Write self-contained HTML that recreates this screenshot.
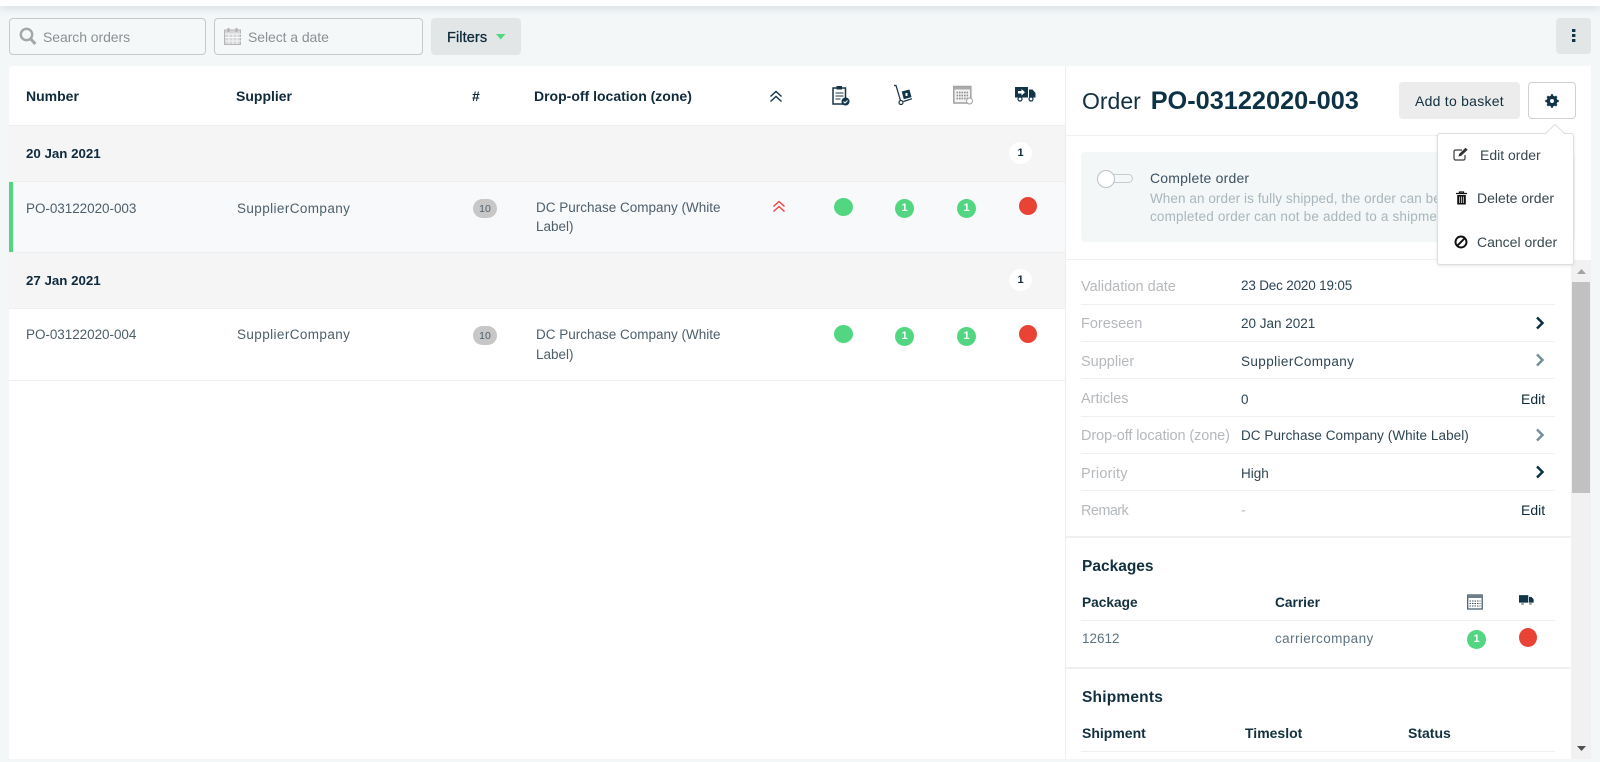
<!DOCTYPE html>
<html><head><meta charset="utf-8"><style>
html,body{margin:0;padding:0}
body{width:1600px;height:762px;position:relative;overflow:hidden;background:#f3f7f8;font-family:"Liberation Sans",sans-serif;color:#0e2a3b;font-size:14px}
.a{position:absolute}
.t{position:absolute;white-space:nowrap;line-height:20px;height:20px;margin-top:-10px}
.b{font-weight:bold;font-size:14px}
.r{color:#4d5f6b;font-size:13.5px}
.l{color:#b5b9bc;font-size:14.5px}
.v{color:#2e4553;font-size:13.5px}
.g{color:#a9b6bc;font-size:13.5px}
.m{font-size:14px;color:#37474f}
.dot{position:absolute;border-radius:50%}
.bd{position:absolute;border-radius:50%;background:#53d681;color:#fff;font-size:11px;font-weight:bold;text-align:center;width:19px;height:19px;line-height:19px}
.ln{position:absolute;height:1px;background:#eef0f1}
svg{position:absolute;overflow:visible}
</style></head><body>
<div class="a" style="left:0;top:0;width:1600px;height:6px;background:#fff;box-shadow:0 2px 8px rgba(60,80,90,.18)"></div>

<div class="a" style="left:9px;top:18px;width:195px;height:35px;border:1px solid #c4c9cb;border-radius:4px;background:#f5f8f9"></div>
<svg style="left:19px;top:27px" width="18" height="19" viewBox="0 0 18 19"><circle cx="7.5" cy="7.5" r="5.7" fill="none" stroke="#a6a6a6" stroke-width="2.4"/><path d="M11.8 12l4.5 5" stroke="#a6a6a6" stroke-width="3" fill="none"/></svg>
<span class="t" style="left:43px;top:37px;color:#8b9093;letter-spacing:-.07px">Search orders</span>

<div class="a" style="left:214px;top:18px;width:207px;height:35px;border:1px solid #c4c9cb;border-radius:4px;background:#f5f8f9"></div>
<svg style="left:224px;top:27px" width="18" height="18" viewBox="0 0 18 18"><rect x=".5" y="3" width="16" height="14.5" fill="#d6d6d6" stroke="#b5b5b5"/><path d="M1 7h16M1 10.5h16M1 14h16M5 7v10M9 7v10M13 7v10" stroke="#f5f8f9" stroke-width="1"/><path d="M4.5 1v4M12.5 1v4" stroke="#b0b0b0" stroke-width="2"/></svg>
<span class="t" style="left:248px;top:37px;color:#8b9093;letter-spacing:-.07px">Select a date</span>

<div class="a" style="left:431px;top:18px;width:90px;height:37px;border-radius:4px;background:#e2e6e7"></div>
<span class="t" style="left:447px;top:38px;font-size:14.5px;letter-spacing:.1px;-webkit-text-stroke:.3px #0e2a3b">Filters</span>
<svg style="left:496px;top:34px" width="10" height="7"><path d="M0 0h9.5L4.7 5.5z" fill="#53d681"/></svg>

<div class="a" style="left:1556px;top:18px;width:35px;height:36px;border-radius:4px;background:#e2e6e7"></div>
<svg style="left:1572px;top:29px" width="4" height="13"><path d="M0 0h3.4v3H0zM0 5h3.4v3H0zM0 10h3.4v3H0z" fill="#12354a"/></svg>

<!-- table -->
<div class="a" style="left:9px;top:66px;width:1056px;height:693px;background:#fff;border-radius:3px 0 0 0"></div>
<div class="a" style="left:9px;top:125px;width:1056px;height:56px;background:#f5f5f5;border-top:1px solid #eee;box-sizing:border-box"></div>
<div class="a" style="left:9px;top:181px;width:1056px;height:71px;background:#f8f9fb;border-top:1px solid #efefef;box-sizing:border-box"></div>
<div class="a" style="left:9px;top:182px;width:4px;height:70px;background:#53d681"></div>
<div class="a" style="left:9px;top:252px;width:1056px;height:56px;background:#f5f5f5;border-top:1px solid #eee;box-sizing:border-box"></div>
<div class="ln" style="left:9px;top:308px;width:1056px;background:#efefef"></div>
<div class="ln" style="left:9px;top:380px;width:1056px;background:#efefef"></div>

<span class="t b" style="left:26px;top:96px">Number</span>
<span class="t b" style="left:236px;top:96px">Supplier</span>
<span class="t b" style="left:472px;top:96px">#</span>
<span class="t b" style="left:534px;top:96px">Drop-off location (zone)</span>

<svg style="left:769px;top:90px" width="14" height="13" viewBox="0 0 14 13" fill="none" stroke="#12354a" stroke-width="1.4"><path d="M1.5 6.5L7 1.5l5.500 5M1.500 11.500L7 6.500l5.500 5"/></svg>
<svg style="left:832px;top:85px" width="18" height="21" viewBox="0 0 18 21" fill="none"><rect x="1" y="3" width="12.500" height="16" fill="#fff" stroke="#1a3445" stroke-width="1.500"/><rect x="4.500" y="1" width="5.500" height="3.500" fill="#1a3445"/><path d="M3.500 8h8M3.500 11h8M3.500 14h5" stroke="#1a3445"/><circle cx="13.500" cy="16.500" r="4" fill="#12354a"/><path d="M11.500 16.500l1.500 1.500 2.500-2.500" stroke="#fff"/></svg>
<svg style="left:893px;top:84px" width="20" height="22" viewBox="0 0 20 22" fill="none" stroke="#1a3445"><path d="M1 1.500h2l4.500 15" stroke-width="1.300"/><circle cx="8" cy="18.500" r="2" stroke-width="1.200"/><path d="M10.500 17.500l8.500-2.800" stroke-width="1.200"/><rect x="9.500" y="6.500" width="8" height="8" fill="#12354a" stroke="none" transform="rotate(-15 13 10)"/><rect x="12.500" y="9" width="2" height="3" fill="#fff" stroke="none"/></svg>
<svg style="left:953px;top:85px" width="20" height="20" viewBox="0 0 20 20" fill="none"><rect x=".8" y="1.500" width="17" height="16.500" stroke="#a0a0a0" stroke-width="1.500" fill="#f4f4f4"/><rect x=".8" y="1.500" width="17" height="3" fill="#aaa"/><path d="M3.500 7.500h12M3.500 10.500h12M3.500 13.500h12" stroke="#8f8f8f" stroke-width="1.700" stroke-dasharray="1.600 .9"/><circle cx="16.500" cy="16" r="3" fill="#fff" stroke="#a0a0a0"/></svg>
<svg style="left:1015px;top:87px" width="21" height="15" viewBox="0 0 21 15"><rect x="0" y="0" width="13" height="10.500" fill="#12354a"/><path d="M3 4h3.500V2L10 5.200 6.500 8.500V6.500H3z" fill="#fff"/><path d="M14 2.500h3.500L20.500 6v4.500H14z" fill="#12354a"/><circle cx="5" cy="12" r="2" fill="#fff" stroke="#12354a" stroke-width="1.200"/><circle cx="16" cy="12" r="2" fill="#fff" stroke="#12354a" stroke-width="1.200"/></svg>

<span class="t b" style="left:26px;top:154px;font-size:13.300px">20 Jan 2021</span>
<div class="dot" style="left:1009px;top:142px;width:23px;height:22px;background:#fff;color:#0e2a3b;font-size:11px;font-weight:bold;line-height:22px;text-align:center">1</div>

<span class="t r" style="left:26px;top:209px;letter-spacing:-.05px">PO-03122020-003</span>
<span class="t r" style="left:237px;top:209px;letter-spacing:.4px">SupplierCompany</span>
<div class="a" style="left:473px;top:199px;width:24px;height:19px;border-radius:10px;background:#c7c7c7;color:#4d5f6b;font-size:10.500px;line-height:20px;text-align:center">10</div>
<span class="t r" style="left:536px;top:208px">DC Purchase Company (White</span>
<span class="t r" style="left:536px;top:227px">Label)</span>
<svg style="left:772px;top:200px" width="14" height="13" viewBox="0 0 14 13" fill="none" stroke="#ef3b3b" stroke-width="1.300"><path d="M1.500 6.500L7 1.500l5.500 5M1.500 11.500L7 6.500l5.500 5"/></svg>
<div class="dot" style="left:834px;top:198px;width:19px;height:18px;background:#53d681"></div>
<div class="bd" style="left:895px;top:199px">1</div>
<div class="bd" style="left:957px;top:199px">1</div>
<div class="dot" style="left:1019px;top:197px;width:18px;height:18px;background:#e84335"></div>

<span class="t b" style="left:26px;top:281px;font-size:13.300px">27 Jan 2021</span>
<div class="dot" style="left:1009px;top:269px;width:23px;height:22px;background:#fff;color:#0e2a3b;font-size:11px;font-weight:bold;line-height:22px;text-align:center">1</div>

<span class="t r" style="left:26px;top:335px;letter-spacing:-.05px">PO-03122020-004</span>
<span class="t r" style="left:237px;top:335px;letter-spacing:.4px">SupplierCompany</span>
<div class="a" style="left:473px;top:326px;width:24px;height:19px;border-radius:10px;background:#c7c7c7;color:#4d5f6b;font-size:10.500px;line-height:20px;text-align:center">10</div>
<span class="t r" style="left:536px;top:335px">DC Purchase Company (White</span>
<span class="t r" style="left:536px;top:355px">Label)</span>
<div class="dot" style="left:834px;top:325px;width:19px;height:18px;background:#53d681"></div>
<div class="bd" style="left:895px;top:327px">1</div>
<div class="bd" style="left:957px;top:327px">1</div>
<div class="dot" style="left:1019px;top:325px;width:18px;height:18px;background:#e84335"></div>

<!-- panel -->
<div class="a" style="left:1065px;top:66px;width:526px;height:693px;background:#fff;border-left:1px solid #eee;box-sizing:border-box"></div>
<span class="t" style="left:1082px;top:101px;font-size:23px;line-height:30px;height:30px;margin-top:-15px;color:#12303f">Order <b style="font-size:25.300px;color:#0d3145;margin-left:3.500px">PO-03122020-003</b></span>
<div class="a" style="left:1399px;top:82px;width:121px;height:37px;background:#ececec;border-radius:4px"></div>
<span class="t" style="left:1415px;top:101px;font-size:14px;letter-spacing:.25px;color:#12303f">Add to basket</span>
<div class="a" style="left:1528px;top:82px;width:48px;height:37px;box-sizing:border-box;border:1px solid #cfd2d3;border-radius:4px;background:#fff"></div>
<svg style="left:1545px;top:94px" width="14" height="14" viewBox="0 0 14 14"><circle cx="7" cy="7" r="3.700" fill="none" stroke="#12354a" stroke-width="3.400"/><path d="M7 .3v2.500M7 11.200v2.500M.3 7h2.500M11.200 7h2.500M2.300 2.300l1.800 1.800M9.900 9.900l1.800 1.800M11.700 2.300L9.900 4.100M4.100 9.900l-1.800 1.800" stroke="#12354a" stroke-width="2.200"/></svg>
<div class="ln" style="left:1066px;top:135px;width:506px"></div>

<div class="a" style="left:1081px;top:152px;width:494px;height:90px;background:#f3f7f8;border-radius:4px"></div>
<div class="a" style="left:1098px;top:174px;width:35px;height:9px;box-sizing:border-box;border:1px solid #c6cbce;border-radius:5px;background:#f3f7f8"></div>
<div class="dot" style="left:1097px;top:170px;width:18px;height:18px;box-sizing:border-box;border:1px solid #bcc2c5;background:#fff"></div>
<span class="t" style="left:1150px;top:178px;font-size:14px;letter-spacing:.2px;color:#3d5260">Complete order</span>
<span class="t g" style="left:1150px;top:199px;letter-spacing:.07px">When an order is fully shipped, the order can be completed</span>
<span class="t g" style="left:1150px;top:217px;letter-spacing:.18px">completed order can not be added to a shipment anymore</span>
<div class="ln" style="left:1066px;top:259px;width:506px"></div>

<!-- details -->
<span class="t l" style="left:1081px;top:287px">Validation date</span><span class="t v" style="left:1241px;top:286px;letter-spacing:-.18px">23 Dec 2020 19:05</span>
<div class="ln" style="left:1081px;top:304px;width:474px"></div>
<span class="t l" style="left:1081px;top:324px">Foreseen</span><span class="t v" style="left:1241px;top:324px">20 Jan 2021</span>
<div class="ln" style="left:1081px;top:341px;width:474px"></div>
<span class="t l" style="left:1081px;top:362px">Supplier</span><span class="t v" style="left:1241px;top:362px;letter-spacing:.4px">SupplierCompany</span>
<div class="ln" style="left:1081px;top:378px;width:474px"></div>
<span class="t l" style="left:1081px;top:399px">Articles</span><span class="t v" style="left:1241px;top:400px">0</span><span class="t" style="left:1521px;top:399px;font-size:14px">Edit</span>
<div class="ln" style="left:1081px;top:416px;width:474px"></div>
<span class="t l" style="left:1081px;top:436px;letter-spacing:-.1px">Drop-off location (zone)</span><span class="t v" style="left:1241px;top:436px;letter-spacing:.06px">DC Purchase Company (White Label)</span>
<div class="ln" style="left:1081px;top:453px;width:474px"></div>
<span class="t l" style="left:1081px;top:474px;letter-spacing:.2px">Priority</span><span class="t v" style="left:1241px;top:474px">High</span>
<div class="ln" style="left:1081px;top:490px;width:474px"></div>
<span class="t l" style="left:1081px;top:511px;letter-spacing:-.6px">Remark</span><span class="t l" style="left:1241px;top:511px">-</span><span class="t" style="left:1521px;top:510px;font-size:14px">Edit</span>
<svg style="left:1535px;top:316px" width="10" height="14"><path d="M2 1.500L7.500 7 2 12.500" fill="none" stroke="#0d3145" stroke-width="2.500"/></svg>
<svg style="left:1535px;top:353px" width="10" height="14"><path d="M2 1.500L7.500 7 2 12.500" fill="none" stroke="#75909c" stroke-width="2.500"/></svg>
<svg style="left:1535px;top:428px" width="10" height="14"><path d="M2 1.500L7.500 7 2 12.500" fill="none" stroke="#75909c" stroke-width="2.500"/></svg>
<svg style="left:1535px;top:465px" width="10" height="14"><path d="M2 1.500L7.500 7 2 12.500" fill="none" stroke="#0d3145" stroke-width="2.500"/></svg>
<div class="a" style="left:1066px;top:536px;width:505px;height:2px;background:#eef0f1"></div>

<!-- packages -->
<span class="t" style="left:1082px;top:567px;font-weight:bold;font-size:15.500px;color:#12303f">Packages</span>
<span class="t b" style="left:1082px;top:603px;font-size:13.700px;color:#12303f">Package</span>
<span class="t b" style="left:1275px;top:603px;font-size:13.700px;color:#12303f">Carrier</span>
<svg style="left:1467px;top:594px" width="16" height="16" viewBox="0 0 16 16"><rect x=".7" y="1" width="14.500" height="14" fill="#fff" stroke="#3d5563" stroke-width="1.200"/><rect x=".7" y="1" width="14.500" height="3" fill="#6d7f8a"/><path d="M2.500 7h11M2.500 9.500h11M2.500 12h11" stroke="#3d5563" stroke-dasharray="1.500 1"/></svg>
<svg style="left:1519px;top:595px" width="15" height="11" viewBox="0 0 21 15"><rect width="13" height="10.500" fill="#12354a"/><path d="M14 2.500h3.500L20.500 6v4.500H14z" fill="#12354a"/><circle cx="5" cy="12" r="2" fill="#9aa" /><circle cx="16" cy="12" r="2" fill="#9aa"/></svg>
<div class="ln" style="left:1081px;top:620px;width:474px"></div>
<span class="t r" style="left:1082px;top:639px;color:#5d7280">12612</span>
<span class="t r" style="left:1275px;top:639px;letter-spacing:.4px;color:#5d7280">carriercompany</span>
<div class="bd" style="left:1467px;top:630px">1</div>
<div class="dot" style="left:1519px;top:628px;width:18px;height:19px;background:#e84335"></div>
<div class="a" style="left:1066px;top:667px;width:505px;height:2px;background:#eef0f1"></div>

<span class="t" style="left:1082px;top:698px;font-weight:bold;font-size:15.500px;letter-spacing:.2px;color:#12303f">Shipments</span>
<span class="t b" style="left:1082px;top:733px;color:#12303f">Shipment</span>
<span class="t b" style="left:1245px;top:733px;color:#12303f">Timeslot</span>
<span class="t b" style="left:1408px;top:733px;color:#12303f">Status</span>
<div class="ln" style="left:1081px;top:751px;width:474px"></div>

<!-- scrollbar -->
<div class="a" style="left:1571px;top:260px;width:20px;height:499px;background:#f1f1f1"></div>
<div class="a" style="left:1572px;top:282px;width:18px;height:211px;background:#c1c1c1"></div>
<svg style="left:1577px;top:269px" width="9" height="6"><path d="M0 5h9L4.500 0z" fill="#a3a3a3"/></svg>
<svg style="left:1577px;top:746px" width="9" height="6"><path d="M0 0h9L4.500 5z" fill="#505050"/></svg>

<!-- dropdown -->
<div class="a" style="left:1437px;top:133px;width:137px;height:132px;box-sizing:border-box;background:#fff;border:1px solid #dcdfe0;border-radius:3px;box-shadow:0 1px 3px rgba(0,0,0,.1)"></div>
<svg style="left:1545px;top:124px" width="20" height="10"><path d="M0 10L10 .5 20 10" fill="#fff" stroke="#dcdfe0"/><path d="M1 10.500h18" stroke="#fff" stroke-width="2"/></svg>
<svg style="left:1453px;top:147px" width="16" height="14" viewBox="0 0 16 14"><path d="M12 8v3.500a1.500 1.500 0 0 1-1.500 1.500h-8A1.500 1.500 0 0 1 1 11.500v-7A1.500 1.500 0 0 1 2.500 3H9" fill="none" stroke="#3a3a3a" stroke-width="1.200"/><path d="M5.500 9.500l.6-2.500L12.500 .8l2.200 2L8 9z" fill="#333"/></svg>
<span class="t m" style="left:1480px;top:155px">Edit order</span>
<svg style="left:1455px;top:191px" width="13" height="14" viewBox="0 0 13 14"><path d="M1 2.500h11M4.500 2.500V1h4v1.500" fill="none" stroke="#111" stroke-width="1.300"/><path d="M2.200 4h8.600v9.500H2.200z" fill="#111"/><path d="M4.700 5.500v6.500M6.500 5.500v6.500M8.300 5.500v6.500" stroke="#fff" stroke-width=".7"/></svg>
<span class="t m" style="left:1477px;top:198px">Delete order</span>
<svg style="left:1454px;top:235px" width="14" height="14" viewBox="0 0 14 14"><circle cx="7" cy="7" r="5.500" fill="none" stroke="#111" stroke-width="1.900"/><path d="M3.200 10.800l7.600-7.600" stroke="#111" stroke-width="1.900"/></svg>
<span class="t m" style="left:1477px;top:242px">Cancel order</span>
</body></html>
